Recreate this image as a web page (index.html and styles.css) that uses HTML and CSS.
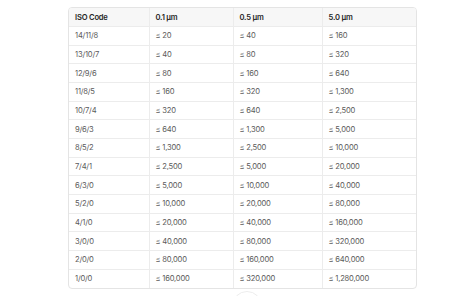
FILE: index.html
```html
<!DOCTYPE html>
<html lang="en">
<head>
    <meta charset="UTF-8">
    <meta name="viewport" content="width=device-width, initial-scale=1.0">
    <title>ISO 4406 codes</title>
    <link rel="stylesheet" href="styles.css">
</head>
<body>
    <div class="table-wrap">
        <table class="iso-table">
            <colgroup>
                <col class="c1">
                <col class="c2">
                <col class="c3">
                <col class="c4">
            </colgroup>
            <thead>
                <tr>
                    <th>ISO Code</th>
                    <th>0.1 μm</th>
                    <th>0.5 μm</th>
                    <th>5.0 μm</th>
                </tr>
            </thead>
            <tbody>
                <tr><td>14/11/8</td><td>≤ 20</td><td>≤ 40</td><td>≤ 160</td></tr>
                <tr><td>13/10/7</td><td>≤ 40</td><td>≤ 80</td><td>≤ 320</td></tr>
                <tr><td>12/9/6</td><td>≤ 80</td><td>≤ 160</td><td>≤ 640</td></tr>
                <tr><td>11/8/5</td><td>≤ 160</td><td>≤ 320</td><td>≤ 1,300</td></tr>
                <tr><td>10/7/4</td><td>≤ 320</td><td>≤ 640</td><td>≤ 2,500</td></tr>
                <tr><td>9/6/3</td><td>≤ 640</td><td>≤ 1,300</td><td>≤ 5,000</td></tr>
                <tr><td>8/5/2</td><td>≤ 1,300</td><td>≤ 2,500</td><td>≤ 10,000</td></tr>
                <tr><td>7/4/1</td><td>≤ 2,500</td><td>≤ 5,000</td><td>≤ 20,000</td></tr>
                <tr><td>6/3/0</td><td>≤ 5,000</td><td>≤ 10,000</td><td>≤ 40,000</td></tr>
                <tr><td>5/2/0</td><td>≤ 10,000</td><td>≤ 20,000</td><td>≤ 80,000</td></tr>
                <tr><td>4/1/0</td><td>≤ 20,000</td><td>≤ 40,000</td><td>≤ 160,000</td></tr>
                <tr><td>3/0/0</td><td>≤ 40,000</td><td>≤ 80,000</td><td>≤ 320,000</td></tr>
                <tr><td>2/0/0</td><td>≤ 80,000</td><td>≤ 160,000</td><td>≤ 640,000</td></tr>
                <tr><td>1/0/0</td><td>≤ 160,000</td><td>≤ 320,000</td><td>≤ 1,280,000</td></tr>
            </tbody>
        </table>
    </div>
    <!-- кнопка прокрутки вниз, видна только краем -->
    <div class="peek">
        <div class="scroll-btn"></div>
    </div>
</body>
</html>
```

FILE: styles.css
```css
body {
    margin: 0;
    padding: 7px 0 0 68px;
    background: #ffffff;
    font-family: Inter, "Noto Sans", sans-serif;
}
.table-wrap {
    width: 347px;
    border: 1px solid #e4e4e4;
    border-radius: 4px;
    overflow: hidden;
}
.iso-table {
    width: 100%;
    border-collapse: collapse;
    table-layout: fixed;
    font-size: 7.6px;
    letter-spacing: -0.2px;
}
.c1 { width: 80px; }
.c2 { width: 84px; }
.c3 { width: 89px; }
.c4 { width: 94px; }
.iso-table th,
.iso-table td {
    height: 18.67px;
    padding: 0 6px;
    text-align: left;
    border-bottom: 1px solid #ececec;
    border-right: 1px solid #ececec;
    box-sizing: border-box;
    white-space: nowrap;
}
.iso-table th:last-child,
.iso-table td:last-child {
    border-right: none;
}
.iso-table tbody tr:last-child td {
    border-bottom: none;
}
.iso-table th {
    background: #f7f7f7;
    color: #262626;
    font-weight: 600;
}
.iso-table td {
    color: #5b5b5b;
}
.peek {
    width: 30px;
    height: 6px;
    margin: 2px 0 0 164px;
    overflow: hidden;
}
.scroll-btn {
    width: 28px;
    height: 28px;
    border: 1px solid #ededed;
    border-radius: 50%;
}
```
